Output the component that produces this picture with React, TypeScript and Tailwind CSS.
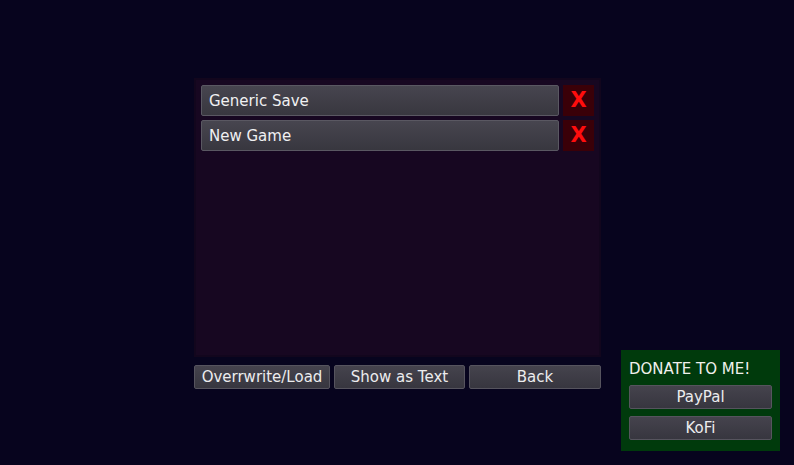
import React from "react";

const saves = ["Generic Save", "New Game"];

const btn =
  "flex items-center justify-center h-[24px] bg-gradient-to-b from-[#45434d] to-[#37363f] border border-[#56545e] rounded-[2px] text-[#ececee] text-[15px] leading-none";

export default function App() {
  return (
    <div
      className="w-[794px] h-[465px] bg-[#07041e] overflow-hidden flex items-start gap-[20px] pl-[194px] pt-[78px]"
      style={{ fontFamily: '"DejaVu Sans", "Noto Sans", sans-serif' }}
    >
      <div className="w-[407px] flex flex-col gap-[8px]">
        <div className="h-[279px] bg-[#170721] border-[2px] border-[#12061d] p-[5px] flex flex-col gap-[4px]">
          {saves.map((name) => (
            <div key={name} className="flex gap-[4px]">
              <div className="flex-1 h-[31px] flex items-center px-[7px] pt-[2px] bg-gradient-to-b from-[#47454f] to-[#38373f] border border-[#5a5862] rounded-[2px] text-[#f0f0f2] text-[15px]">
                {name}
              </div>
              <button className="w-[31px] h-[31px] flex items-center justify-center bg-[#3a0008] text-[#ff0d0d] text-[21px] font-bold">
                X
              </button>
            </div>
          ))}
        </div>
        <div className="flex gap-[4px]">
          <button className={btn + " w-[136px]"}>Overrwrite/Load</button>
          <button className={btn + " w-[131px]"}>Show as Text</button>
          <button className={btn + " flex-1"}>Back</button>
        </div>
      </div>

      <div className="mt-[272px] w-[159px] h-[101px] bg-[#003a0c] px-[8px] pt-[10px] flex flex-col gap-[7px]">
        <div className="text-[#f0f0ec] text-[15px] leading-[18px]">DONATE TO ME!</div>
        <button className={btn + " w-full"}>PayPal</button>
        <button className={btn + " w-full"}>KoFi</button>
      </div>
    </div>
  );
}
